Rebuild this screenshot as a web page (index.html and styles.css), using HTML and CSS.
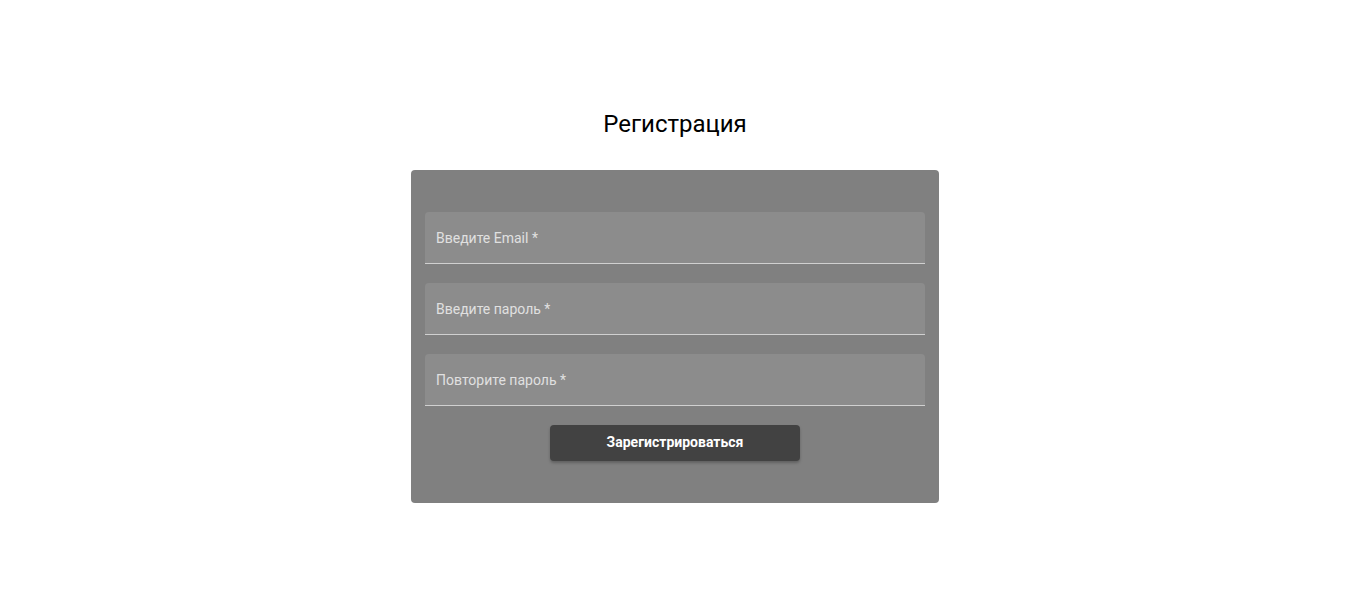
FILE: index.html
```html
<!DOCTYPE html>
<html lang="ru">
<head>
<meta charset="utf-8">
<title>Регистрация</title>
<link rel="stylesheet" href="styles.css">
</head>
<body>
<main class="page">
  <h1 class="title">Регистрация</h1>
  <form class="card">
    <label class="field"><span class="label">Введите Email *</span></label>
    <label class="field"><span class="label">Введите пароль *</span></label>
    <label class="field"><span class="label">Повторите пароль *</span></label>
    <button type="button" class="btn">Зарегистрироваться</button>
  </form>
</main>
</body>
</html>
```
FILE: styles.css
```css
* { box-sizing: border-box; }
html, body { margin: 0; padding: 0; background: #fff; }
body { font-family: Roboto, "Liberation Sans", sans-serif; }
.page {
  display: flex;
  flex-direction: column;
  align-items: center;
  padding-top: 106px;
  padding-right: 2px;
}
.title {
  margin: 0;
  font-size: 24px;
  font-weight: 400;
  line-height: 36px;
  color: #000;
}
.card {
  margin-top: 28px;
  width: 528px;
  background: #808080;
  border-radius: 4px;
  padding: 42px 14px;
  display: flex;
  flex-direction: column;
  align-items: center;
  gap: 19px;
}
.field {
  width: 100%;
  height: 52px;
  background: #8c8c8c;
  border-radius: 4px 4px 0 0;
  border-bottom: 1px solid #d0d0d0;
  display: flex;
  align-items: center;
  padding: 1px 11px 0;
}
.label {
  font-size: 14px;
  color: #e0e0e0;
  line-height: 1;
}
.btn {
  width: 250px;
  height: 36px;
  border: 0;
  border-radius: 4px;
  background: #424242;
  color: #fff;
  font-family: Roboto, "Liberation Sans", sans-serif;
  font-size: 14px;
  font-weight: 700;
  padding: 0 0 2px;
  box-shadow: 0 2px 3px rgba(0,0,0,0.25);
  cursor: pointer;
}
```
